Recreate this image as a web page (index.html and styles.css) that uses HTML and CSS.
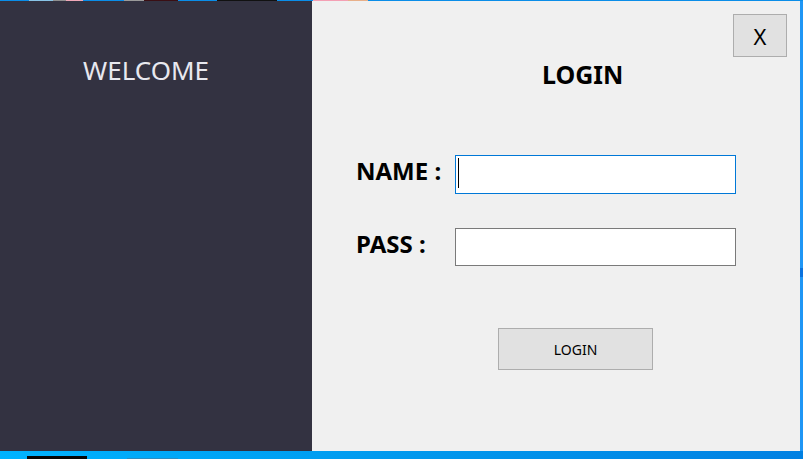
FILE: index.html
```html
<!DOCTYPE html>
<html lang="en">

<head>
    <meta charset="UTF-8">
    <meta name="viewport" content="width=device-width, initial-scale=1.0">
    <title>Login</title>
    <link rel="stylesheet" href="styles.css">
</head>

<body>
    <div class="top-strip"></div>
    <div class="desk">
        <div class="window">
            <aside class="side">
                <h2 class="welcome">WELCOME</h2>
            </aside>
            <main class="login">
                <div class="close-row">
                    <button class="win-btn close-btn">X</button>
                </div>
                <h1 class="title">LOGIN</h1>
                <form class="form" onsubmit="return false">
                    <label class="form-label" for="name">NAME :</label>
                    <div class="field-wrap">
                        <input class="field field-focus" id="name" type="text">
                        <span class="caret"></span>
                    </div>
                    <label class="form-label" for="pass">PASS :</label>
                    <div class="field-wrap">
                        <input class="field field-pass" id="pass" type="password">
                    </div>
                </form>
                <button class="win-btn login-btn">LOGIN</button>
            </main>
        </div>
        <div class="edge"></div>
    </div>
    <div class="taskbar">
        <span class="task task-a"></span>
        <span class="task task-b"></span>
    </div>
</body>

</html>
```

FILE: styles.css
```css
body {
    margin: 0;
    width: 803px;
    height: 459px;
    overflow: hidden;
    font-family: "Noto Sans", "Open Sans", sans-serif;
    background: #0a8fea;
}

.top-strip {
    height: 1px;
    background: linear-gradient(to right,
            #0a8de8 0 29px, #8ac4e6 29px 53px, #8f8f8f 53px 66px, #f0a8b8 66px 83px,
            #0a8de8 83px 124px, #9a9a9a 124px 144px, #3a0f14 144px 178px, #0a8de8 178px 217px,
            #111111 217px 277px, #0a8de8 277px 313px, #f4a0b4 313px 348px, #e8b08a 348px 368px,
            #0a8de8 368px);
}

.desk {
    display: flex;
    height: 450px;
}

.window {
    display: flex;
    width: 800px;
}

.edge {
    flex: 1;
    background: linear-gradient(to bottom, #1f96f5 0 267px, #0a72de 267px 276px, #1f96f5 276px);
}

.side {
    width: 312px;
    background-color: #333241;
    padding: 54px 0 0 83px;
    box-sizing: border-box;
}

.welcome {
    margin: 0;
    font-size: 26px;
    line-height: 30px;
    font-weight: 400;
    color: #e8e8ef;
}

.login {
    flex: 1;
    display: flex;
    flex-direction: column;
    align-items: flex-start;
    background-color: #f0f0f0;
    padding: 13px 13px 0 44px;
}

.close-row {
    align-self: stretch;
    display: flex;
    justify-content: flex-end;
}

.win-btn {
    background-color: #e1e1e1;
    border: 1px solid #adadad;
    color: #000;
    font-family: "Noto Sans", "Open Sans", sans-serif;
    padding: 0;
}

.close-btn {
    width: 54px;
    height: 43px;
    font-size: 22px;
    line-height: 1;
}

.title {
    margin: 0 0 0 186px;
    font-size: 25px;
    line-height: 34px;
    font-weight: 700;
}

.form {
    display: grid;
    grid-template-columns: 99px 281px;
    grid-template-rows: 39px 38px;
    row-gap: 34px;
    margin-top: 64px;
}

.form-label {
    align-self: start;
    margin-top: 1px;
    font-size: 24px;
    font-weight: 700;
    line-height: 30px;
}

.field-wrap {
    position: relative;
}

.field {
    display: block;
    width: 100%;
    height: 100%;
    box-sizing: border-box;
    border: 1px solid #7a7a7a;
    background: #fff;
    outline: none;
    caret-color: transparent;
}

.field-focus {
    border-color: #0078d7;
}

.caret {
    position: absolute;
    left: 3px;
    top: 3px;
    width: 1px;
    height: 30px;
    background: #000;
}

.login-btn {
    margin: 62px 0 0 142px;
    width: 155px;
    height: 42px;
    font-size: 14px;
}

.taskbar {
    position: relative;
    height: 8px;
    background: linear-gradient(to right, #00b3ff, #0096ec 55%, #0080e2);
}

.task {
    position: absolute;
    bottom: 0;
}

.task-a {
    left: 27px;
    width: 60px;
    height: 3px;
    background: #050505;
}

.task-b {
    left: 127px;
    width: 51px;
    height: 1px;
    background: #2a8ec4;
}
```
